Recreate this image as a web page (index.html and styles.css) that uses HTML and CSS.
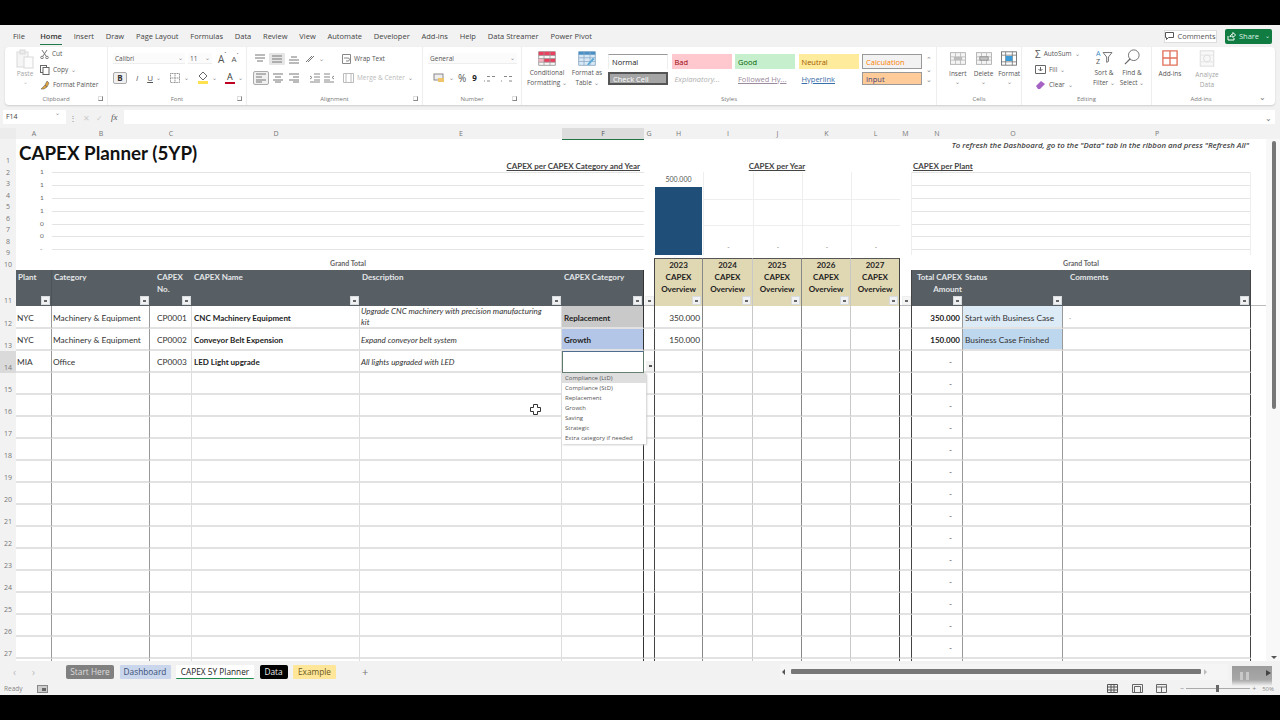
FILE: index.html
```html
<!DOCTYPE html>
<html lang="en">
<head>
<meta charset="utf-8">
<title>CAPEX Planner (5YP)</title>
<link rel="stylesheet" href="styles.css">
</head>
<body>
<div class="app">

  <header class="menu">
    <nav class="menu-items">
      <span>File</span><span class="active">Home</span><span>Insert</span><span>Draw</span><span>Page Layout</span><span>Formulas</span><span>Data</span><span>Review</span><span>View</span><span>Automate</span><span>Developer</span><span>Add-ins</span><span>Help</span><span>Data Streamer</span><span>Power Pivot</span>
    </nav>
    <button class="comments"><svg width="9" height="8" viewBox="0 0 9 8"><path d="M.5.5h8v5h-5L1.5 7.500v-2h-1z" fill="none" stroke="#555"/></svg>Comments</button>
    <button class="share"><svg width="9" height="9" viewBox="0 0 9 9"><path d="M1 4v4h6V6M3 5c0-2 2-3 3-3V.5L8.500 3 6 5.500V4C5 4 4 4 3 5z" fill="none" stroke="#fff"/></svg>Share<span class="share-split">⌄</span></button>
  </header>

  <section class="ribbon">
    <div class="group g-clip">
      <div class="body clip-body">
        <div class="big faded">
          <svg width="18" height="20" viewBox="0 0 18 20"><rect x="1" y="3" width="11" height="15" fill="#eee" stroke="#bbb"/><rect x="4" y="1" width="5" height="4" fill="#ddd" stroke="#bbb"/><rect x="8" y="8" width="9" height="11" fill="#fafafa" stroke="#bbb"/></svg>
          <span>Paste</span><span class="caret">⌄</span>
        </div>
        <div class="stack">
          <span class="item"><svg width="9" height="9" viewBox="0 0 9 9"><path d="M2 0l4 6M7 0L3 6" stroke="#777" fill="none"/><circle cx="2" cy="7.500" r="1.300" fill="none" stroke="#777"/><circle cx="7" cy="7.500" r="1.300" fill="none" stroke="#777"/></svg>Cut</span>
          <span class="item"><svg width="10" height="10" viewBox="0 0 10 10"><rect x=".5" y=".5" width="6" height="7" fill="#fff" stroke="#666"/><rect x="3" y="2.500" width="6" height="7" fill="#fff" stroke="#666"/></svg>Copy <i class="caret">⌄</i></span>
          <span class="item"><svg width="10" height="10" viewBox="0 0 10 10"><path d="M1 9l4-4 2 2-3 2zM5 5l2-4 2 2-2 4z" fill="#e0a33c" stroke="#666" stroke-width=".6"/></svg>Format Painter</span>
        </div>
      </div>
      <div class="label">Clipboard<i class="launch"></i></div>
    </div>

    <div class="group g-font">
      <div class="body two-rows">
        <div class="line">
          <span class="select font-name">Calibri<i class="caret">⌄</i></span>
          <span class="select font-size">11<i class="caret">⌄</i></span>
          <span class="glyph a-big">A<sup>ˆ</sup></span><span class="glyph a-small">A<sup>ˇ</sup></span>
        </div>
        <div class="line font-tools">
          <b class="toggle">B</b><em class="glyph">I</em><u class="glyph">U</u><i class="caret">⌄</i>
          <svg class="ml" width="12" height="12" viewBox="0 0 12 12"><path d="M1.500 1.500h9v9h-9zM6 1.500v9M1.500 6h9" fill="none" stroke="#8a8a8a" stroke-dasharray="1 .6"/></svg><i class="caret">⌄</i>
          <svg class="ml" width="12" height="13" viewBox="0 0 12 13"><path d="M6 1l4 4-4 4-4-4z" fill="#fff" stroke="#666"/><rect x="1" y="10" width="10" height="3" fill="#ffe14d"/></svg><i class="caret">⌄</i>
          <span class="font-color ml">A</span><i class="caret">⌄</i>
        </div>
      </div>
      <div class="label">Font<i class="launch"></i></div>
    </div>

    <div class="group g-align">
      <div class="body two-rows">
        <div class="line">
          <svg width="14" height="10" viewBox="0 0 14 10"><path d="M2 1h10M2 4h10M4 7h6" stroke="#777"/></svg>
          <span class="tool-on"><svg width="14" height="10" viewBox="0 0 14 10"><path d="M2 2h10M2 5h10M2 8h10" stroke="#777"/></svg></span>
          <svg width="14" height="10" viewBox="0 0 14 10"><path d="M4 3h6M2 6h10M2 9h10" stroke="#777"/></svg>
          <svg class="ml2" width="12" height="10" viewBox="0 0 12 10"><path d="M1 8l6-6M3 8l6-6" stroke="#777"/></svg><i class="caret">⌄</i>
          <span class="item wrap-text"><svg width="9" height="10" viewBox="0 0 9 10"><path d="M.5.500h8v9h-8zM2 4h4a1.500 1.500 0 0 1 0 3H4" fill="none" stroke="#888"/></svg>Wrap Text</span>
        </div>
        <div class="line">
          <span class="tool-box"><svg width="14" height="10" viewBox="0 0 14 10"><path d="M2 1h10M2 4h6M2 7h10M2 9h6" stroke="#777"/></svg></span>
          <svg width="14" height="10" viewBox="0 0 14 10"><path d="M2 1h10M4 4h6M2 7h10M4 9h6" stroke="#777"/></svg>
          <svg width="14" height="10" viewBox="0 0 14 10"><path d="M2 1h10M6 4h6M2 7h10M6 9h6" stroke="#777"/></svg>
          <svg class="ml3" width="12" height="10" viewBox="0 0 12 10"><path d="M5 1h6M5 4h6M5 7h6M1 9h10M1 3l2 1.500L1 6" fill="none" stroke="#888"/></svg>
          <svg width="12" height="10" viewBox="0 0 12 10"><path d="M1 1h6M1 4h6M1 7h6M1 9h10M11 3L9 4.500 11 6" fill="none" stroke="#888"/></svg>
          <span class="item merge"><svg width="11" height="10" viewBox="0 0 11 10"><path d="M.5.500h10v9H.5zM3 .5v9M8 .5v9" fill="none" stroke="#bbb"/></svg>Merge &amp; Center <i class="caret">⌄</i></span>
        </div>
      </div>
      <div class="label">Alignment<i class="launch"></i></div>
    </div>

    <div class="group g-num">
      <div class="body two-rows">
        <div class="line"><span class="select num-format">General<i class="caret">⌄</i></span></div>
        <div class="line num-tools">
          <svg width="12" height="10" viewBox="0 0 12 10"><rect x="1" y="1" width="9" height="6" fill="#eee" stroke="#888"/><rect x="5" y="5" width="6" height="4" fill="#f0c36d"/></svg><i class="caret">⌄</i>
          <span class="glyph pct">%</span><b class="glyph comma">9</b>
          <svg width="13" height="10" viewBox="0 0 13 10"><path d="M1 8h1M4 3.500h3M9 3.500h3M4 8h3" stroke="#888"/></svg>
          <svg width="13" height="10" viewBox="0 0 13 10"><path d="M1 8h1M4 3.500h3M9 3.500h3M9 8h3" stroke="#888"/></svg>
        </div>
      </div>
      <div class="label">Number<i class="launch"></i></div>
    </div>

    <div class="group g-styles">
      <div class="body styles-body">
        <div class="big large">
          <svg width="18" height="15" viewBox="0 0 24 20"><rect x="1" y="1" width="22" height="18" fill="#f6f6f6" stroke="#888"/><path d="M1 1h22v5H1zM8 10h15v5H8z" fill="#e8405e"/><path d="M1 10h7v5H1z" fill="#f5b5c0"/><path d="M1 6h22M1 10h22M1 15h22M8 1v18M16 1v18" stroke="#999" fill="none"/></svg>
          <span>Conditional<br>Formatting <i class="caret">⌄</i></span>
        </div>
        <div class="big large">
          <svg width="18" height="15" viewBox="0 0 24 20"><rect x="1" y="1" width="22" height="18" fill="#d9e8f5" stroke="#7a9cbc"/><path d="M1 1h22v4H1z" fill="#4a90c4"/><path d="M1 9h22M1 14h22M8 1v18M16 1v18" stroke="#8aa9c4"/><path d="M12 18l8-9 2 2-8 8z" fill="#5aa9d6"/></svg>
          <span>Format as<br>Table <i class="caret">⌄</i></span>
        </div>
        <div class="gallery">
          <span class="st st-normal">Normal</span><span class="st st-bad">Bad</span><span class="st st-good">Good</span><span class="st st-neutral">Neutral</span><span class="st st-calc">Calculation</span>
          <span class="st st-check">Check Cell</span><span class="st st-expl">Explanatory...</span><span class="st st-fol">Followed Hy...</span><span class="st st-link">Hyperlink</span><span class="st st-input">Input</span>
        </div>
        <div class="gallery-arrows"><i>⌃</i><i>⌄</i><i>⌄</i></div>
      </div>
      <div class="label">Styles</div>
    </div>

    <div class="group g-cells">
      <div class="body cells-body">
        <div class="big small-big"><svg width="18" height="15" viewBox="0 0 20 18"><rect x="1" y="2" width="18" height="14" fill="#f4f4f4" stroke="#aaa"/><path d="M1 7h18M1 11h18M7 2v14M13 2v14" stroke="#bbb"/><rect x="5" y="7" width="10" height="4" fill="#bbb"/></svg><span>Insert</span><i class="caret">⌄</i></div>
        <div class="big small-big"><svg width="18" height="15" viewBox="0 0 20 18"><rect x="1" y="2" width="18" height="14" fill="#f4f4f4" stroke="#aaa"/><path d="M1 7h18M1 11h18M7 2v14M13 2v14" stroke="#bbb"/><rect x="5" y="7" width="10" height="4" fill="#c4c4c4" stroke="#888"/></svg><span>Delete</span><i class="caret">⌄</i></div>
        <div class="big small-big"><svg width="18" height="15" viewBox="0 0 20 18"><rect x="1" y="1" width="18" height="16" fill="#fff" stroke="#666"/><path d="M1 5h18M1 13h18M6 1v16M14 1v16" stroke="#777"/><rect x="6" y="6" width="8" height="6" fill="#3d9bd8"/></svg><span>Format</span><i class="caret">⌄</i></div>
      </div>
      <div class="label">Cells</div>
    </div>

    <div class="group g-edit">
      <div class="body edit-body">
        <div class="stack edit-stack">
          <span class="item"><span class="sigma">Σ</span>AutoSum <i class="caret">⌄</i></span>
          <span class="item"><svg width="11" height="9" viewBox="0 0 11 9"><path d="M.5.500h10v8H.5zM5.500 2v4M3.500 4l2 2 2-2" fill="none" stroke="#666"/></svg>Fill <i class="caret">⌄</i></span>
          <span class="item"><svg width="11" height="10" viewBox="0 0 11 10"><path d="M1 6l5-5 4 3-5 5H3z" fill="#a561c4"/></svg>Clear <i class="caret">⌄</i></span>
        </div>
        <div class="big sf"><svg width="18" height="16" viewBox="0 0 20 18"><text x="1" y="8" class="az">A</text><text x="1" y="17" class="az az2">Z</text><path d="M9 4h10l-4 5v5l-2 1V9z" fill="none" stroke="#666"/></svg><span>Sort &amp;<br>Filter <i class="caret">⌄</i></span></div>
        <div class="big sf"><svg width="18" height="16" viewBox="0 0 20 18"><circle cx="12" cy="7" r="6" fill="none" stroke="#666"/><path d="M8 11l-6 6" stroke="#666" stroke-width="1.300"/></svg><span>Find &amp;<br>Select <i class="caret">⌄</i></span></div>
      </div>
      <div class="label">Editing</div>
    </div>

    <div class="group g-add">
      <div class="body add-body">
        <div class="big addin"><svg width="16" height="16" viewBox="0 0 18 18"><path d="M1 1h16v16H1zM9 1v16M1 9h16" fill="none" stroke="#e2725b" stroke-width="1.500"/></svg><span>Add-ins</span></div>
        <div class="big addin faded"><svg width="16" height="17" viewBox="0 0 18 20"><rect x="1" y="1" width="16" height="18" fill="#f3f3f3" stroke="#bbb"/><circle cx="9" cy="10" r="4" fill="none" stroke="#bbb"/><path d="M1 6h16M1 14h16" stroke="#ccc"/></svg><span>Analyze<br>Data</span></div>
      </div>
      <div class="label">Add-ins</div>
    </div>
    <div class="ribbon-end">⌄</div>
  </section>

  <section class="formula">
    <div class="namebox">F14<i class="caret">⌄</i></div>
    <div class="fx-tools"><span class="fx-dots">⋮</span><span class="fx-x">✕</span><span class="fx-x">✓</span><em class="fx">fx</em></div>
    <div class="fx-input"><span>⌄</span></div>
  </section>

  <div class="sheet">
    <div class="colhead">
      <div class="corner"></div><div>A</div><div>B</div><div>C</div><div>D</div><div>E</div><div class="sel">F</div><div>G</div><div>H</div><div>I</div><div>J</div><div>K</div><div>L</div><div>M</div><div>N</div><div>O</div><div>P</div><div></div>
    </div>
    <div class="cells">
      <div class="top">
        <div class="rh">1</div><div class="rh">2</div><div class="rh">3</div><div class="rh">4</div><div class="rh">5</div><div class="rh">6</div><div class="rh">7</div><div class="rh">8</div><div class="rh">9</div><div class="rh">10</div><div class="rh">11</div>

        <h1 class="title">CAPEX Planner (5YP)</h1>
        <p class="refresh">To refresh the Dashboard, go to the "Data" tab in the ribbon and press "Refresh All"</p>

        <h2 class="sec sec-cat">CAPEX per CAPEX Category and Year</h2>
        <h2 class="sec sec-year">CAPEX per Year</h2>
        <h2 class="sec sec-plant">CAPEX per Plant</h2>

        <div class="chart-lines chart-cat">
          <div class="gl"><span>1</span></div><div class="gl"><span>1</span></div><div class="gl"><span>1</span></div><div class="gl"><span>1</span></div><div class="gl"><span>0</span></div><div class="gl"><span>0</span></div><div class="gl"><span>-</span></div>
        </div>
        <div class="chart-year">
          <div class="yc first"><span>500.000</span><div class="bar"></div></div>
          <div class="yc"><span>-</span></div><div class="yc"><span>-</span></div><div class="yc"><span>-</span></div><div class="yc"><span>-</span></div>
        </div>
        <div class="chart-lines chart-plant">
          <div class="gl"></div><div class="gl"></div><div class="gl"></div><div class="gl"></div><div class="gl"></div><div class="gl"></div><div class="gl"></div>
        </div>
        <div class="gt gt-cat">Grand Total</div>
        <div class="gt gt-plant">Grand Total</div>

        <div class="th c-a"><span>Plant</span><i class="fb"></i></div>
        <div class="th c-b"><span>Category</span><i class="fb"></i></div>
        <div class="th c-c"><span>CAPEX No.</span><i class="fb"></i></div>
        <div class="th c-d"><span>CAPEX Name</span><i class="fb"></i></div>
        <div class="th c-e"><span>Description</span><i class="fb"></i></div>
        <div class="th c-f"><span>CAPEX Category</span><i class="fb"></i></div>
        <div class="gcell c-g"><i class="fb"></i></div>
        <div class="yh c-h"><span>2023<br>CAPEX<br>Overview</span><i class="fb"></i></div>
        <div class="yh c-i"><span>2024<br>CAPEX<br>Overview</span><i class="fb"></i></div>
        <div class="yh c-j"><span>2025<br>CAPEX<br>Overview</span><i class="fb"></i></div>
        <div class="yh c-k"><span>2026<br>CAPEX<br>Overview</span><i class="fb"></i></div>
        <div class="yh c-l"><span>2027<br>CAPEX<br>Overview</span><i class="fb"></i></div>
        <div class="gcell c-m"><i class="fb"></i></div>
        <div class="th c-n"><span class="right">Total CAPEX Amount</span><i class="fb"></i></div>
        <div class="th c-o"><span>Status</span><i class="fb"></i></div>
        <div class="th c-p"><span class="pad">Comments</span><i class="fb"></i></div>
      </div>

      <div class="row tall"><div class="rh">12</div><div>NYC</div><div>Machinery &amp; Equipment</div><div>CP0001</div><div class="b">CNC Machinery Equipment</div><div class="it wrap">Upgrade CNC machinery with precision manufacturing kit</div><div class="b rep">Replacement</div><div></div><div class="num">350.000</div><div></div><div></div><div></div><div></div><div></div><div class="num b">350.000</div><div class="st1">Start with Business Case</div><div class="pad">·</div></div>
      <div class="row"><div class="rh">13</div><div>NYC</div><div>Machinery &amp; Equipment</div><div>CP0002</div><div class="b">Conveyor Belt Expension</div><div class="it">Expand conveyor belt system</div><div class="b gro">Growth</div><div></div><div class="num">150.000</div><div></div><div></div><div></div><div></div><div></div><div class="num b">150.000</div><div class="st2">Business Case Finished</div><div></div></div>
      <div class="row"><div class="rh rh-sel">14</div><div>MIA</div><div>Office</div><div>CP0003</div><div class="b">LED Light upgrade</div><div class="it">All lights upgraded with LED</div><div class="cur"><ul class="dd"><li class="on">Compliance (LtD)</li><li>Compliance (StD)</li><li>Replacement</li><li>Growth</li><li>Saving</li><li>Strategic</li><li>Extra category if needed</li></ul><i class="ddb"></i></div><div></div><div></div><div></div><div></div><div></div><div></div><div></div><div class="num dash">-</div><div></div><div></div></div>
      <div class="row"><div class="rh">15</div><div></div><div></div><div></div><div></div><div></div><div></div><div></div><div></div><div></div><div></div><div></div><div></div><div></div><div class="num dash">-</div><div></div><div></div></div>
      <div class="row"><div class="rh">16</div><div></div><div></div><div></div><div></div><div></div><div></div><div></div><div></div><div></div><div></div><div></div><div></div><div></div><div class="num dash">-</div><div></div><div></div></div>
      <div class="row"><div class="rh">17</div><div></div><div></div><div></div><div></div><div></div><div></div><div></div><div></div><div></div><div></div><div></div><div></div><div></div><div class="num dash">-</div><div></div><div></div></div>
      <div class="row"><div class="rh">18</div><div></div><div></div><div></div><div></div><div></div><div></div><div></div><div></div><div></div><div></div><div></div><div></div><div></div><div class="num dash">-</div><div></div><div></div></div>
      <div class="row"><div class="rh">19</div><div></div><div></div><div></div><div></div><div></div><div></div><div></div><div></div><div></div><div></div><div></div><div></div><div></div><div class="num dash">-</div><div></div><div></div></div>
      <div class="row"><div class="rh">20</div><div></div><div></div><div></div><div></div><div></div><div></div><div></div><div></div><div></div><div></div><div></div><div></div><div></div><div class="num dash">-</div><div></div><div></div></div>
      <div class="row"><div class="rh">21</div><div></div><div></div><div></div><div></div><div></div><div></div><div></div><div></div><div></div><div></div><div></div><div></div><div></div><div class="num dash">-</div><div></div><div></div></div>
      <div class="row"><div class="rh">22</div><div></div><div></div><div></div><div></div><div></div><div></div><div></div><div></div><div></div><div></div><div></div><div></div><div></div><div class="num dash">-</div><div></div><div></div></div>
      <div class="row"><div class="rh">23</div><div></div><div></div><div></div><div></div><div></div><div></div><div></div><div></div><div></div><div></div><div></div><div></div><div></div><div class="num dash">-</div><div></div><div></div></div>
      <div class="row"><div class="rh">24</div><div></div><div></div><div></div><div></div><div></div><div></div><div></div><div></div><div></div><div></div><div></div><div></div><div></div><div class="num dash">-</div><div></div><div></div></div>
      <div class="row"><div class="rh">25</div><div></div><div></div><div></div><div></div><div></div><div></div><div></div><div></div><div></div><div></div><div></div><div></div><div></div><div class="num dash">-</div><div></div><div></div></div>
      <div class="row"><div class="rh">26</div><div></div><div></div><div></div><div></div><div></div><div></div><div></div><div></div><div></div><div></div><div></div><div></div><div></div><div class="num dash">-</div><div></div><div></div></div>
      <div class="row"><div class="rh">27</div><div></div><div></div><div></div><div></div><div></div><div></div><div></div><div></div><div></div><div></div><div></div><div></div><div></div><div class="num dash">-</div><div></div><div></div></div>
      <div class="row"><div class="rh"></div><div></div><div></div><div></div><div></div><div></div><div></div><div></div><div></div><div></div><div></div><div></div><div></div><div></div><div></div><div></div><div></div></div>

      <div class="vscroll"><i class="up"></i><div class="vthumb"></div><i class="down"></i></div>
      <svg class="cursor" width="11" height="11" viewBox="0 0 11 11"><path d="M3.500.5h4v3h3v4h-3v3h-4v-3h-3v-4h3z" fill="#fff" stroke="#333"/></svg>
    </div>
  </div>

  <footer class="tabs">
    <span class="nav">‹</span><span class="nav">›</span>
    <div class="tab-list">
      <span class="tab t-start">Start Here</span>
      <span class="tab t-dash">Dashboard</span>
      <span class="tab t-cur">CAPEX 5Y Planner</span>
      <span class="tab t-data">Data</span>
      <span class="tab t-ex">Example</span>
    </div>
    <span class="plus">+</span>
    <div class="hscroll"><i class="la"></i><div class="hthumb"></div><i class="ra"></i></div>
  </footer>

  <footer class="status">
    <span class="ready">Ready</span>
    <svg width="11" height="8" viewBox="0 0 11 8"><rect x=".5" y=".5" width="10" height="7" fill="#ccc" stroke="#888"/><rect x="5" y="3" width="4" height="3" fill="#666"/></svg>
    <div class="status-right">
      <span class="view on"><svg width="11" height="9" viewBox="0 0 11 9"><path d="M.5.500h10v8H.5zM.5 3h10M.5 6h10M4 .5v8M7 .5v8" fill="none" stroke="#555"/></svg></span>
      <span class="view"><svg width="11" height="9" viewBox="0 0 11 9"><path d="M.5.500h10v8H.5zM2.500 2.500h6v6h-6z" fill="none" stroke="#666"/></svg></span>
      <span class="view"><svg width="11" height="9" viewBox="0 0 11 9"><path d="M.5.500h10v8H.5zM.5 3h10M5.500 3v5.500" fill="none" stroke="#666"/></svg></span>
      <div class="zoom"><span class="zb">−</span><div class="ztrack"><i></i></div><span class="zb">+</span><span class="zp">50%</span></div>
    </div>
  </footer>

  <div class="player"><i class="pb"></i><i class="pb"></i><i class="pn"></i></div>
</div>
</body>
</html>
```
FILE: styles.css
```css
* { box-sizing: border-box; }
html, body { margin: 0; padding: 0; height: 720px; overflow: hidden; background: #000; }
body { font-family: "Open Sans", sans-serif; font-size: 7px; color: #555; }
i { font-style: normal; }
svg { display: block; flex: none; }
button { font: inherit; }

.app { position: relative; margin-top: 25px; height: 670px; background: #f2f2f2; display: flex; flex-direction: column; overflow: hidden; }

/* menu */
.menu { height: 22px; flex: none; display: flex; align-items: center; padding: 0 8px 0 13px; }
.menu-items { display: flex; gap: 11.800px; padding-top: 2px; font-size: 7.500px; color: #444; flex: 1; }
.menu-items span { line-height: 13px; }
.menu-items .active { font-weight: 600; color: #333; border-bottom: 1px solid #1f7a4c; margin-left: 3.500px; height: 15px; }
.comments { height: 13px; width: 53px; border: 1px solid #ddd; background: #fff; color: #555; font-size: 7.500px; display: flex; align-items: center; justify-content: center; gap: 3px; padding: 0; margin-right: 8px; }
.share { height: 15px; width: 47px; border: 0; background: #107c41; border-radius: 2px; color: #dff0e6; font-size: 7.500px; display: flex; align-items: center; justify-content: center; gap: 3px; padding: 0; }
.share-split { margin-left: 3px; font-size: 6px; }

/* ribbon */
.ribbon { height: 58px; flex: none; margin: 0 5px; background: #fff; border-radius: 4px; box-shadow: 0 1px 2px #ccc; display: flex; }
.group { display: flex; flex-direction: column; border-right: 1px solid #eee; flex: none; }
.body { height: 46px; flex: none; }
.label { position: relative; height: 12px; text-align: center; font-size: 6px; line-height: 12px; color: #777; }
.launch { position: absolute; right: 4px; top: 3px; width: 5px; height: 5px; border: 1px solid #888; border-top-color: #ddd; border-left-color: #ddd; }
.caret { font-size: 6px; color: #888; line-height: 1; }
.g-clip { width: 103px; }
.g-font { width: 139px; }
.g-align { width: 176px; }
.g-num { width: 99px; }
.g-styles { width: 415px; }
.g-cells { width: 85px; }
.g-edit { width: 130px; }
.g-add { width: 98px; border-right: 0; }
.ribbon-end { flex: 1; display: flex; align-items: flex-end; justify-content: center; padding-bottom: 3px; color: #777; font-size: 8px; }

.big { display: flex; flex-direction: column; align-items: center; text-align: center; font-size: 6.500px; line-height: 9.500px; color: #555; white-space: nowrap; }
.faded { opacity: .55; }
.clip-body { display: flex; gap: 3px; padding: 2px 0 0 8px; }
.clip-body .big { width: 24px; }
.stack { display: flex; flex-direction: column; gap: 5.500px; padding-top: 0; }
.item { display: flex; align-items: center; gap: 3px; font-size: 6.500px; line-height: 10px; color: #555; white-space: nowrap; }

.two-rows { display: flex; flex-direction: column; gap: 6px; padding: 5px 0 0 5px; }
.line { display: flex; align-items: center; height: 13px; gap: 3px; }
.select { display: flex; align-items: center; justify-content: space-between; height: 11px; background: #fbfbfb; font-size: 6.500px; padding: 0 2px; border-bottom: 1px solid #eee; }
.font-name { width: 72px; }
.font-size { width: 24px; }
.glyph { font-size: 8px; color: #555; }
.a-big { font-size: 10px; margin-left: 3px; }
.a-small { font-size: 8px; margin-left: 2px; }
sup { font-size: 5px; vertical-align: top; line-height: 1; }
.toggle { width: 14px; height: 12px; border: 1px solid #aaa; border-radius: 2px; background: #f0f0f0; text-align: center; font-size: 8px; line-height: 10px; color: #333; }
.font-tools em, .font-tools u { margin-left: 6px; }
.ml { margin-left: 5px; }
.ml2 { margin-left: 2px; }
.ml3 { margin-left: 6px; }
.font-color { font-size: 9px; line-height: 10px; color: #333; border-bottom: 2px solid #c00020; padding: 0 2px; }

.g-align .two-rows { padding-left: 6px; }
.g-align .line { gap: 2px; }
.tool-on { background: #e6e6e6; padding: 1px; border-radius: 1px; }
.tool-box { border: 1px solid #aaa; border-radius: 2px; padding: 1px 0; background: #f0f0f0; }
.wrap-text { margin-left: 16px; }
.merge { margin-left: 6px; color: #bbb; }

.g-num .two-rows { padding-left: 5px; }
.num-format { width: 89px; }
.num-tools { gap: 4px; padding-left: 5px; }
.pct { font-size: 10px; margin-left: 0; }
.comma { font-size: 8px; color: #222; margin: 0 2px; }

.styles-body { display: flex; padding: 4px 0 0 5px; }
.large { width: 40px; }
.large svg { margin-bottom: 2px; }
.big .caret { display: inline; }
.gallery { display: grid; grid-template-columns: repeat(5, 60px); grid-template-rows: 15px 13px; column-gap: 3.500px; row-gap: 3px; margin-left: 1px; padding-top: 3px; }
.st { display: flex; align-items: center; padding-left: 3px; font-size: 7.500px; white-space: nowrap; overflow: hidden; }
.st-normal { background: #fff; border-top: 1px solid #999; border-left: 1px solid #eee; border-right: 1px solid #eee; color: #222; }
.st-bad { background: #ffc7ce; color: #9c0006; }
.st-good { background: #c6efce; color: #006100; }
.st-neutral { background: #ffeb9c; color: #9c5700; }
.st-calc { background: #f2f2f2; color: #fa7d00; border: 1px solid #999; }
.st-check { background: #a5a5a5; color: #fff; border: 2px solid #555; }
.st-expl { color: #b0b0b0; font-style: italic; }
.st-fol { color: #9b8aa0; text-decoration: underline; }
.st-link { color: #3a6ea8; text-decoration: underline; }
.st-input { background: #ffcc99; color: #3f3f76; border: 1px solid #999; }
.gallery-arrows { display: flex; flex-direction: column; align-items: center; width: 10px; margin-left: 2px; padding-top: 4px; color: #888; font-size: 7px; line-height: 10px; }

.cells-body { display: flex; gap: 2px; padding: 4px 0 0 9px; }
.small-big { width: 24px; }
.small-big svg { margin-bottom: 3px; }
.edit-body { display: flex; padding: 2px 0 0 13px; }
.edit-stack { width: 55px; gap: 5.500px; }
.sigma { font-size: 10px; line-height: 10px; color: #555; }
.sf { width: 28px; }
.sf svg { margin-bottom: 3px; }
.az { font-size: 8px; fill: #3a8ac4; font-family: "Open Sans", sans-serif; }
.az2 { fill: #555; }
.add-body { display: flex; gap: 9px; padding: 3px 0 0 4px; }
.addin { width: 28px; }
.addin svg { margin-bottom: 3px; }

/* formula */
.formula { height: 14px; flex: none; margin: 5px 5px 4px 3px; display: flex; gap: 1px; }
.namebox { width: 63px; background: #fff; padding: 0 6px 0 3px; font-size: 7px; line-height: 14px; color: #444; display: flex; justify-content: space-between; }
.fx-tools { width: 56px; display: flex; align-items: center; gap: 6px; font-size: 8px; color: #ccc; padding-left: 2px; }
.fx-dots { color: #888; }
.fx { color: #555; font-family: "Liberation Serif", serif; font-size: 9px; margin-left: 2px; }
.fx-input { flex: 1; background: #fff; display: flex; justify-content: flex-end; align-items: center; padding-right: 3px; color: #777; font-size: 8px; }

/* sheet */
.sheet { --cols: 16px 36px 98px 42px 168px 202px 82px 10px 49px 50px 49px 49px 49px 11px 52px 100px 188px 1fr; height: 533px; flex: none; display: flex; flex-direction: column; background: #fff; overflow: hidden; }
.colhead { height: 11px; flex: none; display: grid; grid-template-columns: var(--cols); background: #f2f2f2; font-size: 7px; line-height: 11px; text-align: center; color: #777; }
.colhead .sel { background: #dcdcdc; border-bottom: 1px solid #217346; color: #555; }
.corner { background: #ececec; }
.cells { position: relative; flex: 1; overflow: hidden; font-family: Lato, "Open Sans", sans-serif; color: #333; }

.top { display: grid; grid-template-columns: var(--cols); grid-template-rows: 27px repeat(8, 11.500px) 12px 36px; height: 167px; border-bottom: 1px solid #bbb; }
.rh { grid-column: 1; background: #f2f2f2; color: #777; font-family: "Open Sans", sans-serif; font-size: 7px; line-height: 9px; text-align: center; display: flex; align-items: flex-end; justify-content: center; padding-bottom: 1px; }
.rh-sel { background: #dadada; }

.title { grid-column: 2 / 6; grid-row: 1; margin: 0; padding: 2px 0 0 3px; font-family: Lato, sans-serif; font-size: 18.800px; line-height: 24px; font-weight: 700; color: #111; white-space: nowrap; }
.refresh { grid-column: 15 / 18; grid-row: 1; justify-self: end; margin: 1px 2px 0 0; font-family: "Open Sans", sans-serif; font-size: 7.800px; line-height: 11px; font-style: italic; font-weight: 600; color: #444; white-space: nowrap; }

.sec { margin: 22px 0 0; font-size: 8px; line-height: 11px; font-weight: 700; text-decoration: underline; color: #444; white-space: nowrap; grid-row: 1 / 3; align-self: start; }
.sec-cat { grid-column: 2 / 8; justify-self: end; margin-right: 4px; }
.sec-year { grid-column: 9 / 14; justify-self: center; }
.sec-plant { grid-column: 15 / 18; justify-self: start; margin-left: 2px; }

.chart-lines { grid-row: 2 / 10; display: flex; flex-direction: column; gap: 11.300px; padding-top: 6px; }
.gl { border-top: 1px solid #e4e4e4; height: 1.600px; position: relative; }
.gl span { position: absolute; left: -12px; top: -6px; font-size: 6.500px; line-height: 10px; color: #666; }
.chart-cat { grid-column: 3 / 8; }
.chart-plant { grid-column: 15 / 18; border-left: 1px solid #eee; border-right: 1px solid #eee; padding-top: 0; margin-top: 6px; margin-bottom: 3px; }

.chart-year { grid-column: 9 / 14; grid-row: 2 / 10; display: grid; grid-template-columns: 49px 50px 49px 49px 49px; margin-top: 6px; margin-bottom: 3.500px; background: linear-gradient(#eee, #eee) 0 27px / 100% 1px no-repeat, linear-gradient(#eee, #eee) 0 53px / 100% 1px no-repeat; }
.yc { display: flex; flex-direction: column; justify-content: flex-end; align-items: center; border-left: 1px solid #eee; font-size: 6.500px; line-height: 10px; color: #555; padding-bottom: 3px; }
.yc.first { border-left: 0; padding: 0 1px; background: #fff; }
.yc.first span { font-size: 7px; line-height: 15px; }
.bar { width: 47px; flex: 1; background: #1f4e79; }

.gt { grid-row: 10; font-size: 7px; line-height: 10px; font-weight: 700; color: #666; justify-self: center; white-space: nowrap; }
.gt-cat { grid-column: 3 / 8; }
.gt-plant { grid-column: 15 / 18; }

.th { grid-row: 10 / 12; margin-top: 12px; background: #575f65; color: #e4e6e8; font-size: 8px; line-height: 12px; font-weight: 700; padding: 1px 1px 0; display: flex; flex-direction: column; justify-content: space-between; }
.th span { padding-left: 1px; }
.th .right { text-align: right; padding-right: 0; }
.th .pad { padding-left: 6px; }
.th.c-c span { padding-left: 6px; }
.fb { display: block; align-self: flex-end; width: 9px; height: 9px; background: #eff1f2 no-repeat center; background-image: linear-gradient(#666, #666); background-size: 3px 2px; border: 1px solid #d8dbdd; flex: none; margin-bottom: 1px; }
.yh { grid-row: 10 / 12; background: #e0d7b3; color: #222; font-size: 8px; line-height: 12px; font-weight: 700; text-align: center; display: flex; flex-direction: column; justify-content: space-between; border-top: 1.500px solid #555; padding: 0 1px; }
.gcell { grid-row: 11; display: flex; flex-direction: column; justify-content: flex-end; }
.gcell .fb { background-color: #f5f5f5; border-color: #eee; }
.c-a { grid-column: 2; border-right: 1px solid #4d5459; }
.c-b { grid-column: 3; }
.c-c { grid-column: 4; }
.c-d { grid-column: 5; }
.c-e { grid-column: 6; }
.c-f { grid-column: 7; border-right: 1.500px solid #333; }
.c-g { grid-column: 8; }
.c-h { grid-column: 9; border-left: 1.500px solid #444; border-right: 1px solid #888; }
.c-i { grid-column: 10; border-right: 1px solid #c8c8c8; }
.c-j { grid-column: 11; border-right: 1px solid #888; }
.c-k { grid-column: 12; border-right: 1px solid #c8c8c8; }
.c-l { grid-column: 13; border-right: 1.500px solid #444; }
.c-m { grid-column: 14; }
.c-n { grid-column: 15; border-left: 1.500px solid #444; }
.c-o { grid-column: 16; }
.c-p { grid-column: 17; border-right: 1.500px solid #444; }

.row { display: grid; grid-template-columns: var(--cols); height: 22px; }
.row.tall { height: 23px; }
.row > div { border-bottom: 2px solid #e2e2e2; display: flex; align-items: center; padding: 2px 1px 0 1px; font-size: 8.300px; line-height: 11px; white-space: nowrap; overflow: hidden; color: #333; }
.row.tall > div { padding-top: 3px; }
.row > .rh, .row.tall > .rh { padding: 0 0 1px; font-size: 7px; line-height: 9px; color: #777; border-bottom: 0; align-items: flex-end; }
.row > :nth-child(2), .row > :nth-child(3) { border-right: 1px solid #999; }
.row > :nth-child(4), .row > :nth-child(5), .row > :nth-child(6) { border-right: 1px solid #ddd; }
.row > :nth-child(4) { padding-left: 7px; }
.row > :nth-child(5), .row > :nth-child(16) { padding-left: 2px; }
.row > :nth-child(7) { border-right: 1.500px solid #333; padding-left: 2px; }
.row > :nth-child(9) { border-left: 1.500px solid #444; border-right: 1px solid #888; }
.row > :nth-child(10) { border-right: 1px solid #c8c8c8; }
.row > :nth-child(11) { border-right: 1px solid #888; }
.row > :nth-child(12) { border-right: 1px solid #c8c8c8; }
.row > :nth-child(13) { border-right: 1.500px solid #444; }
.row > :nth-child(15) { border-left: 1.500px solid #444; border-right: 1px solid #999; }
.row > :nth-child(16) { border-right: 1px solid #999; }
.row > :nth-child(17) { border-right: 1.500px solid #444; }
.row > :nth-child(18) { border-bottom-color: transparent; }
.row > .b { font-size: 8px; font-weight: 700; color: #222; }
.row > .it { font-size: 8px; font-style: italic; }
.row.tall > .wrap { white-space: normal; padding-top: 0; padding-right: 10px; }
.row > .rep { background: #c9c9c9; }
.row > .gro { background: #b4c6e7; }
.row > .st1 { background: #ddebf7; }
.row > .st2 { background: #bdd7ee; }
.row > .num { justify-content: flex-end; padding-right: 2px; }
.row > .dash { padding-right: 10px; color: #555; }
.row > .pad { padding-left: 6px; color: #aaa; }
.row > .cur { position: relative; overflow: visible; border: 1.500px solid #5f7a6b; border-top-color: #4f6c93; z-index: 2; background: #fff; }

.dd { position: absolute; left: -1px; top: 21px; width: 84px; height: 71px; margin: 0; padding: 0; list-style: none; background: #fff; box-shadow: 1px 1px 2px #ccc; font-family: "Open Sans", sans-serif; font-size: 6px; line-height: 10px; color: #555; z-index: 3; }
.dd li { padding-left: 3px; height: 10px; white-space: nowrap; }
.dd .on { background: #dedede; }
.ddb { position: absolute; right: -11px; top: 9px; width: 8px; height: 10px; background: #f2f2f2 no-repeat center; background-image: linear-gradient(#555, #555); background-size: 3px 2px; }

.vscroll { position: absolute; right: 0; top: 0; bottom: 0; width: 14px; background: #f8f8f8; display: flex; flex-direction: column; align-items: center; }
.vthumb { width: 4px; height: 268px; background: #777; border-radius: 2px; margin-top: 2px; margin-left: 2px; }
.up, .down { width: 0; height: 0; border: 3px solid transparent; margin-left: 2px; }
.up { border-bottom-color: #666; border-top-width: 0; position: absolute; top: -6px; }
.down { border-top-color: #555; border-bottom-width: 0; position: absolute; bottom: 2px; }
.cursor { position: absolute; left: 530px; top: 265px; z-index: 4; }

/* tabs */
.tabs { height: 21px; flex: none; display: flex; align-items: center; padding-left: 13px; background: #f2f2f2; }
.nav { width: 19px; font-size: 10px; color: #bbb; }
.tab-list { display: flex; gap: 5.500px; margin-left: 15px; }
.tab { height: 14px; display: flex; align-items: center; justify-content: center; font-size: 8.300px; border-radius: 1px; }
.t-start { width: 48px; background: #808080; color: #ddd; border-radius: 2px; }
.t-dash { width: 51px; background: #c9d6ec; color: #3b4f77; }
.t-cur { width: 78px; background: #fff; color: #222; border-bottom: 1.500px solid #1f8a50; font-weight: 500; }
.t-data { width: 28px; background: #000; color: #eee; border-radius: 2px; }
.t-ex { width: 43px; background: #ffe699; color: #6a5a20; }
.plus { margin-left: 26px; font-size: 11px; color: #777; }
.hscroll { margin-left: auto; margin-right: 52px; width: 448px; height: 16px; display: flex; align-items: center; gap: 3px; background: #f5f5f5; padding-left: 2px; }
.hthumb { width: 410px; height: 5px; background: #777; margin-left: 3px; border-radius: 1px; }
.la, .ra { width: 0; height: 0; border: 3px solid transparent; }
.la { border-right-color: #555; border-left-width: 0; }
.ra { border-left-color: #bbb; border-right-width: 0; }

/* status */
.status { height: 13px; flex: none; display: flex; align-items: center; padding-left: 4px; gap: 14px; background: #f2f2f2; }
.ready { font-size: 6.500px; color: #888; }
.status-right { margin-left: auto; display: flex; align-items: center; gap: 0; padding-right: 6px; }
.view { width: 24.500px; display: flex; justify-content: center; }
.zoom { display: flex; align-items: center; gap: 2px; margin-left: 6px; font-size: 7px; color: #888; }
.ztrack { position: relative; width: 64px; height: 1px; background: #aaa; }
.ztrack i { position: absolute; left: 30px; top: -3px; width: 3px; height: 7px; background: #666; }
.zp { margin-left: 4px; font-size: 6px; }

/* video player overlay */
.player { position: absolute; left: 1232px; top: 641px; width: 40px; height: 20px; background: linear-gradient(#9c9c9c, #a8a8a8 70%, #c8c8c800); display: flex; align-items: center; padding-left: 8px; gap: 3px; }
.pb { width: 3px; height: 8px; background: #c8c8c8; }
.pn { width: 0; height: 0; border: 3px solid transparent; border-left: 5px solid #444; border-right-width: 0; margin-left: 14px; margin-top: -6px; }
```
